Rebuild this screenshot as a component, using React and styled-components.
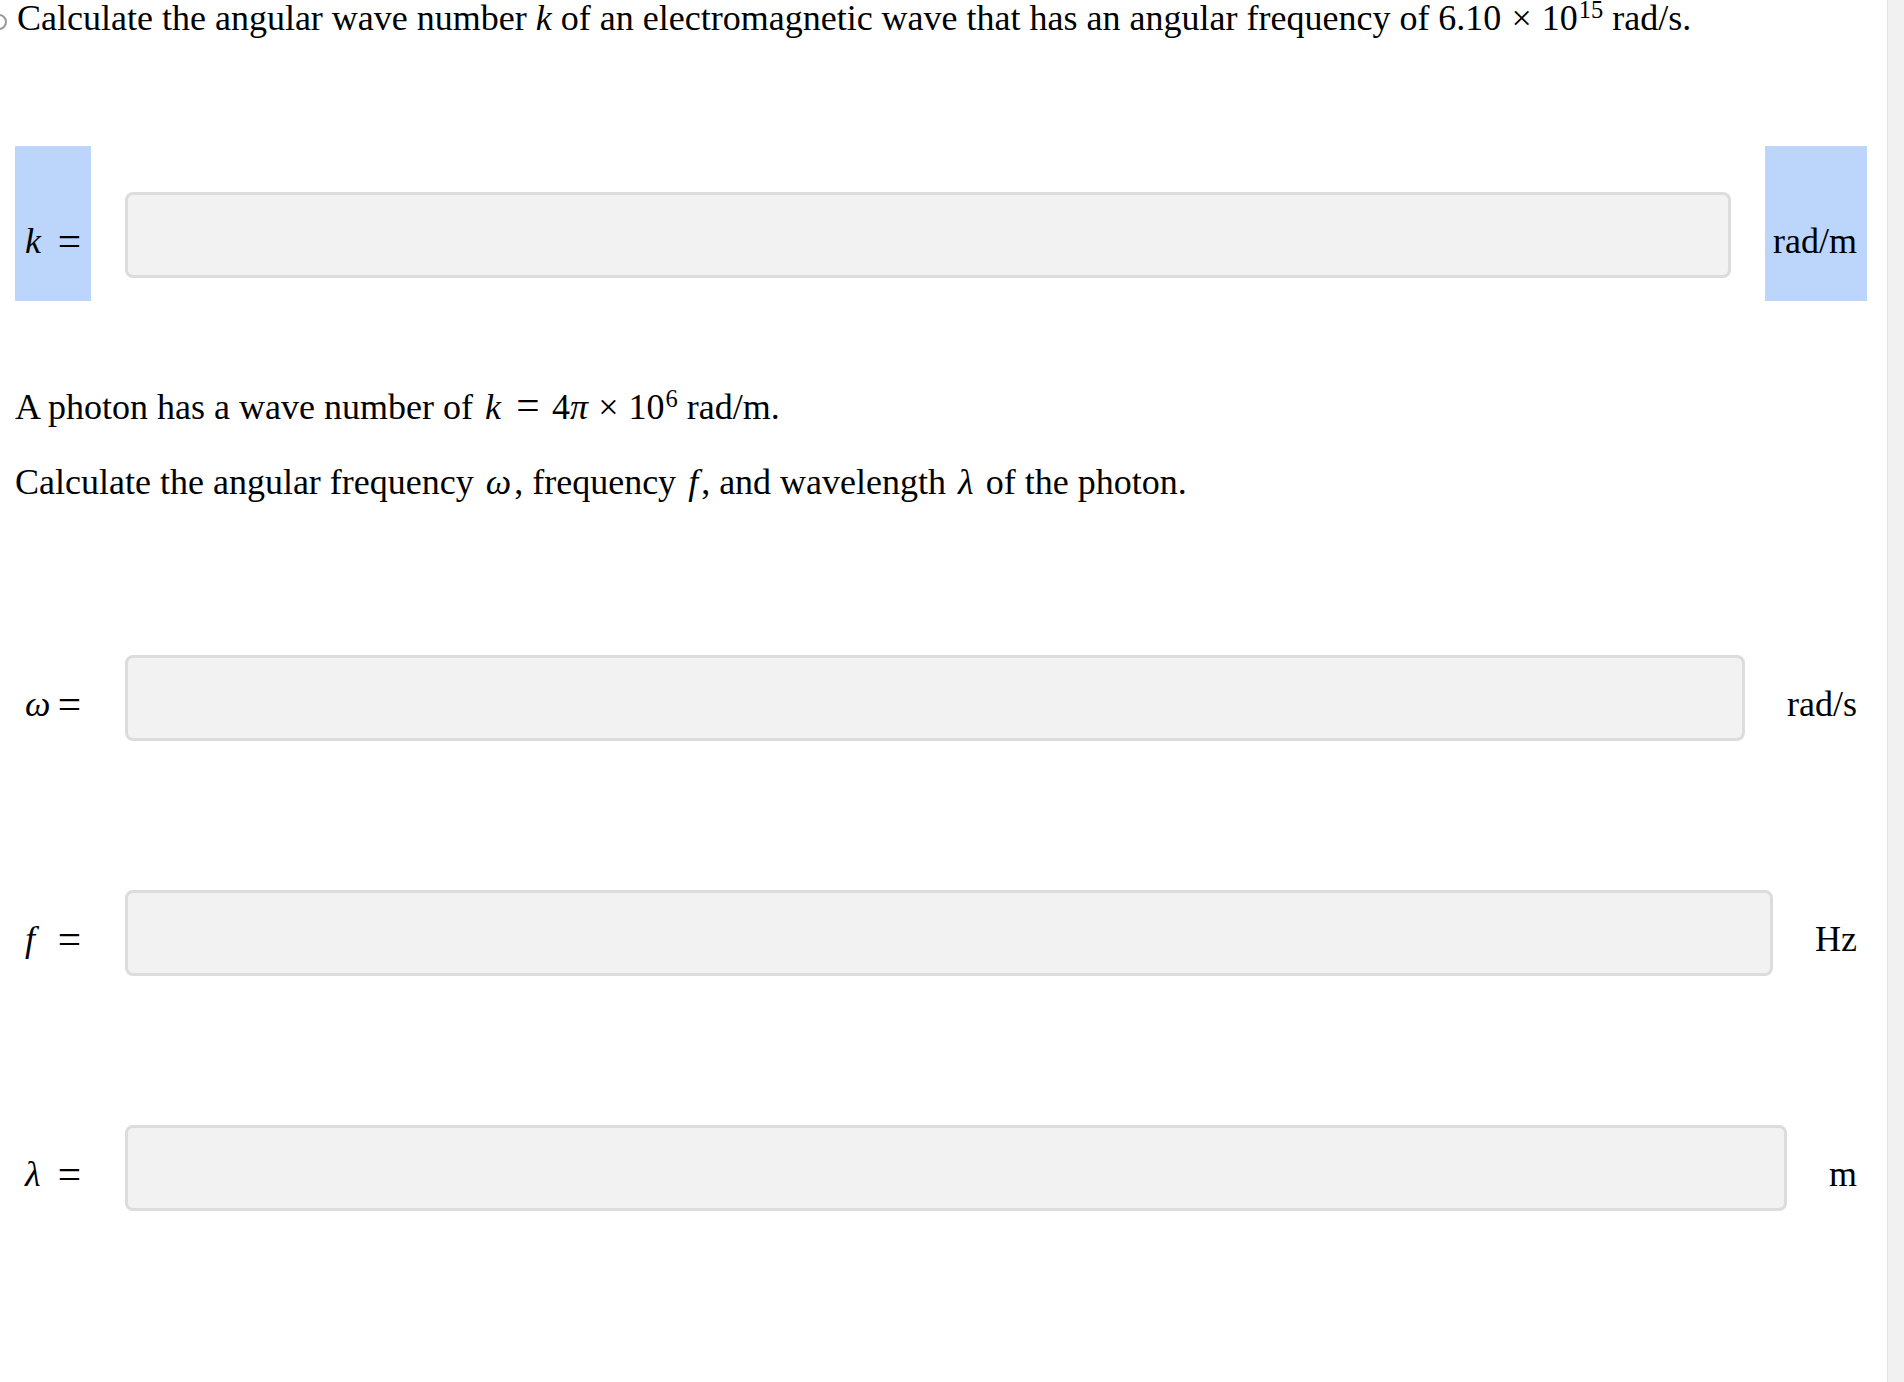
import React from "react";
import styled, { createGlobalStyle } from "styled-components";

const GlobalStyle = createGlobalStyle`
  html, body {
    margin: 0;
    padding: 0;
    background: #fff;
    overflow: hidden;
  }
  body {
    font-family: "Liberation Serif", "Times New Roman", serif;
    color: #000;
  }
`;

const rows = [
  { id: "omega", symbol: "ω", unit: "rad/s" },
  { id: "f", symbol: "f", unit: "Hz" },
  { id: "lambda", symbol: "λ", unit: "m" }
];

export default function App() {
  return (
    <>
      <GlobalStyle />
      <Page>
        <Main>
          <Prompt>
            <Marker />
            Calculate the angular wave number <Var>k</Var> of an electromagnetic
            wave that has an angular frequency of 6.10<Op>×</Op>10
            <Sup>15</Sup> rad/s.
          </Prompt>

          <AnswerRow $first>
            <Label $highlight>
              <Var>k</Var>
              <Eq $label>=</Eq>
            </Label>
            <Input type="text" aria-label="k" />
            <Unit $highlight>rad/m</Unit>
          </AnswerRow>

          <Para $gap={88}>
            A photon has a wave number of <Var $pad>k</Var>
            <Eq>=</Eq>4<Var>π</Var>
            <Op>×</Op>10<Sup>6</Sup> rad/m.
          </Para>
          <Para $gap={38}>
            Calculate the angular frequency <Var $pad>ω</Var>, frequency{" "}
            <Var $pad>f</Var>, and wavelength <Var $pad>λ</Var> of the photon.
          </Para>

          <Answers>
            {rows.map(row => (
              <AnswerRow key={row.id}>
                <Label>
                  <Var>{row.symbol}</Var>
                  <Eq $label>=</Eq>
                </Label>
                <Input type="text" aria-label={row.id} />
                <Unit>{row.unit}</Unit>
              </AnswerRow>
            ))}
          </Answers>
        </Main>
        <ScrollTrack />
      </Page>
    </>
  );
}

const Page = styled.div`
  display: flex;
  width: 1904px;
  height: 1382px;
`;

const Main = styled.div`
  flex: 1;
  padding: 0 20px 0 15px;
  min-width: 0;
`;

const ScrollTrack = styled.div`
  width: 16px;
  flex-shrink: 0;
  background: #f1f1f1;
  border-left: 1px solid #e4e4e4;
`;

const Prompt = styled.p`
  margin: 0;
  font-size: 36px;
  line-height: 37px;
  white-space: nowrap;
`;

const Marker = styled.span`
  display: inline-block;
  width: 12px;
  height: 12px;
  margin-left: -24px;
  margin-right: 10px;
  border: 2px solid #9a9a9a;
  border-radius: 50%;
  vertical-align: 0;
`;

const Para = styled.p`
  margin: ${p => p.$gap}px 0 0;
  font-size: 36px;
  line-height: 37px;
  white-space: nowrap;
`;

const Var = styled.i`
  font-style: italic;
  padding: 0 ${p => (p.$pad ? "3px" : "0")};
`;

const Eq = styled.span`
  margin: ${p => (p.$label ? "0" : "0 0.3em")};
  font-size: 1.15em;
  line-height: 0;
`;

const Op = styled.span`
  margin: 0 0.28em;
`;

const Sup = styled.sup`
  font-size: 0.68em;
  line-height: 0;
  vertical-align: 0.48em;
  margin-left: 1px;
`;

const Answers = styled.div`
  margin-top: 108px;
  display: flex;
  flex-direction: column;
  gap: 80px;
`;

const AnswerRow = styled.div`
  display: grid;
  grid-template-columns: 76px 1fr auto;
  column-gap: 34px;
  align-items: stretch;
  height: 155px;
  margin-top: ${p => (p.$first ? "109px" : "0")};
  font-size: 36px;
`;

const Label = styled.div`
  display: flex;
  align-items: center;
  justify-content: space-between;
  padding: 34px 10px 0;
  background: ${p => (p.$highlight ? "#bbd6fa" : "transparent")};
  white-space: nowrap;
`;

const Unit = styled.div`
  display: flex;
  align-items: center;
  justify-content: flex-end;
  padding: 34px 10px 0 8px;
  background: ${p => (p.$highlight ? "#bbd6fa" : "transparent")};
  white-space: nowrap;
`;

const Input = styled.input`
  align-self: center;
  margin-top: 22px;
  height: 86px;
  box-sizing: border-box;
  min-width: 0;
  border: 3px solid #dcdcdc;
  border-radius: 8px;
  background: #f2f2f2;
  outline: none;
  font-family: inherit;
  font-size: 28px;
  padding: 0 14px;
`;
